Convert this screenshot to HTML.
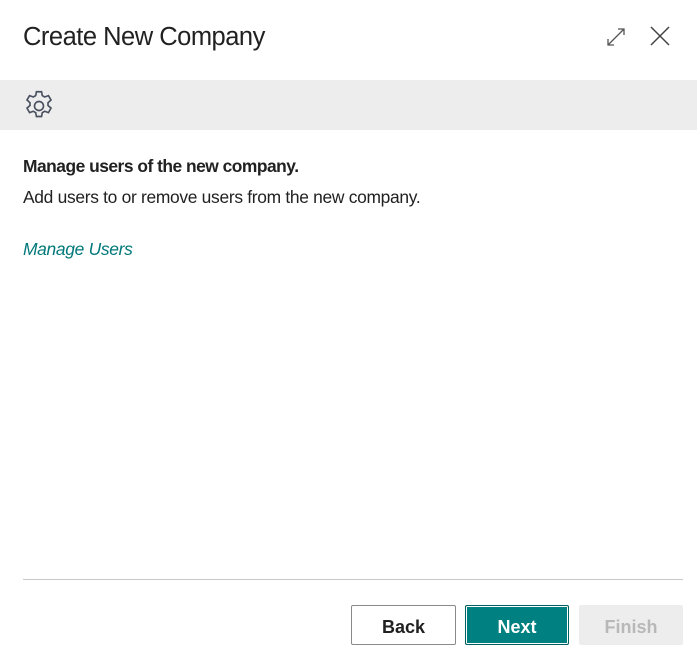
<!DOCTYPE html>
<html><head><style>
body{margin:0;width:697px;height:670px;background:#fff;font-family:"Liberation Sans",sans-serif;color:#212121;position:relative;overflow:hidden}
.t{position:absolute;left:23px;top:23px;font-size:25.5px;letter-spacing:-0.5px}
.band{position:absolute;left:0;top:80px;width:697px;height:50px;background:#ededed}
.p{position:absolute;left:23px;font-size:17.4px;letter-spacing:-0.3px}
.sep{position:absolute;left:23px;top:579px;width:660px;height:1px;background:#c8c8c8}
.b{position:absolute;top:605px;height:40px;box-sizing:border-box;font-size:18px;font-weight:bold;display:flex;align-items:center;justify-content:center;border-radius:2px;padding-top:4px}
</style></head><body>
<div class="t">Create New Company</div>
<svg style="position:absolute;left:605px;top:26px" width="22" height="22" viewBox="0 0 22 22" fill="none" stroke="#555" stroke-width="1.3"><path d="M3 19L19 3M13 3h6v6M3 13v6h6"/></svg>
<svg style="position:absolute;left:649px;top:25px" width="22" height="22" viewBox="0 0 22 22" fill="none" stroke="#444" stroke-width="1.5"><path d="M2 2L20 20M20 2L2 20"/></svg>
<div class="band"></div>
<svg style="position:absolute;left:21px;top:88px" width="36" height="36" viewBox="0 0 24 24" fill="none" stroke="#4a5060" stroke-width="1.1"><path d="M10.3 2.5h3.4l.5 2.6 1.6.9 2.5-.9 1.7 2.9-2 1.8v1.9l2 1.7-1.7 3-2.5-.9-1.6.9-.5 2.6h-3.4l-.5-2.6-1.6-.9-2.5.9-1.7-3 2-1.7v-1.9l-2-1.8 1.7-2.9 2.5.9 1.6-.9z"/><circle cx="12" cy="12" r="3"/></svg>
<div class="p" style="top:156px;font-weight:bold;letter-spacing:-0.5px">Manage users of the new company.</div>
<div class="p" style="top:187px">Add users to or remove users from the new company.</div>
<div class="p" style="top:239px;font-style:italic;color:#00787a">Manage Users</div>
<div class="sep"></div>
<div class="b" style="left:351px;width:105px;border:1px solid #8a8a8a;color:#212121">Back</div>
<div class="b" style="left:465px;width:104px;background:#008080;color:#fff;border:1px solid #005f5f;box-shadow:inset 0 0 0 1px #fff">Next</div>
<div class="b" style="left:579px;width:104px;background:#ededed;color:#b8b8b8">Finish</div>
</body></html>
